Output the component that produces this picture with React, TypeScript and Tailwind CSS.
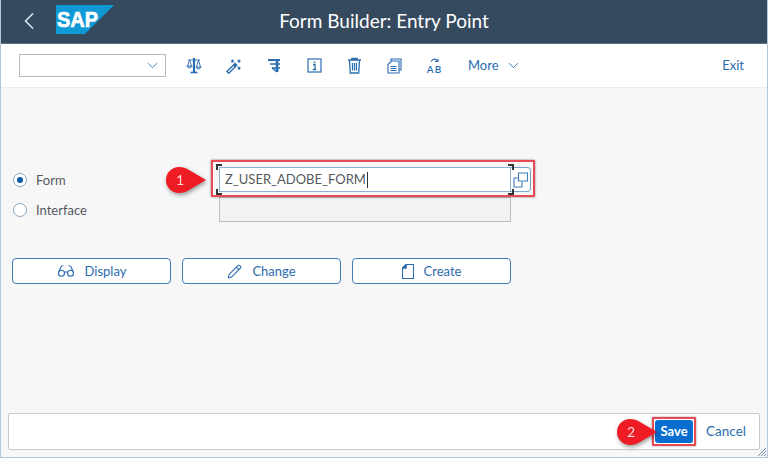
import { ChevronDown, ChevronLeft, Glasses, Pencil } from "lucide-react";

const blue = "#2a6cb0";

const ScalesIcon = () => (
  <svg width="16" height="17" viewBox="0 0 16 17" fill="none" stroke={blue} strokeWidth="1.2">
    <path d="M2 3h12M3.500 3L1.500 9M3.500 3l2 6M12.500 3l-2 7M12.500 3l2 7" strokeWidth="0.9" />
    <path d="M1 9c.5 2.500 4.500 2.500 5 0zM10 10c.5 2.500 4.500 2.500 5 0z" fill="#cfe0f1" strokeWidth="1" />
    <path d="M8 1v14" strokeWidth="2.200" />
    <path d="M4.500 15.500h7" strokeWidth="1.600" />
  </svg>
);

const WandIcon = () => (
  <svg width="16" height="16" viewBox="0 0 16 16" fill={blue}>
    <path d="M1 13.500l8-8 1.800 1.800-8 8z" fill="none" stroke={blue} strokeWidth="1.300" />
    <path d="M7 7.500l1.800 1.800 2-2-1.800-1.800z" />
    <path d="M6.500 1l.6 1.300 1.400.2-1 1 .2 1.400-1.200-.7-1.200.7.2-1.400-1-1 1.400-.2zM13 1l.6 1.300 1.400.2-1 1 .2 1.400-1.200-.7-1.200.7.2-1.400-1-1 1.400-.2zM13 8l.6 1.300 1.400.2-1 1 .2 1.400-1.200-.7-1.200.7.2-1.400-1-1 1.400-.2z" />
  </svg>
);

const TreeIcon = () => (
  <svg width="14" height="16" viewBox="0 0 14 16" fill="none" stroke={blue}>
    <path d="M1 2h12" strokeWidth="2" />
    <path d="M3 6h10M5 10h8" strokeWidth="1.500" />
    <path d="M10 2v12" strokeWidth="2.600" />
    <path d="M5 10l5 4" strokeWidth="1.200" />
  </svg>
);

const InfoIcon = () => (
  <svg width="15" height="15" viewBox="0 0 15 15" fill="none" stroke={blue}>
    <rect x="1" y="1" width="13" height="13" strokeWidth="1.200" />
    <path d="M6 6.500h2v5M5.800 11.500h3.400" strokeWidth="1.300" />
    <path d="M6.800 3.500h1.500v1.500H6.800z" fill={blue} stroke="none" />
  </svg>
);

const TrashIcon = () => (
  <svg width="15" height="17" viewBox="0 0 15 17" fill="none" stroke={blue}>
    <path d="M1 3h13M5 3V1.500h5V3" strokeWidth="1.600" />
    <path d="M2.500 3.500l.8 12.500h8.400l.8-12.500" strokeWidth="1.300" />
    <path d="M5.500 6v7.500M7.500 6v7.500M9.500 6v7.500" strokeWidth="1.200" />
  </svg>
);

const CopyIcon = () => (
  <svg width="15" height="16" viewBox="0 0 15 16" fill="none" stroke={blue} strokeWidth="1.100">
    <path d="M4 3V1h10v11h-2" />
    <path d="M4.500 3H12v12H1V6.500z" fill="#fff" />
    <path d="M3.500 8.500h6M3.500 10.500h6M3.500 12.500h6" />
  </svg>
);

const TranslateIcon = () => (
  <div className="relative flex h-[16px] w-[14px] items-end justify-center gap-px text-[10px] leading-[10px] font-semibold text-[#2a6cb0]">
    <span>A</span>
    <span>B</span>
    <svg className="absolute top-0 left-[3px]" width="9" height="6" viewBox="0 0 9 6" fill="none" stroke={blue} strokeWidth="1.200">
      <path d="M1 3.500C3 .5 6 .5 7 3M5 3.500h3V1" />
    </svg>
  </div>
);

const CreateIcon = () => (
  <svg width="12" height="15" viewBox="0 0 12 15" fill="none" stroke={blue} strokeWidth="1.100">
    <path d="M4 .5h7.500v14H.5V4z" />
    <path d="M.5 4.200L4.200.5v3.700z" fill={blue} />
  </svg>
);

const SapLogo = () => (
  <svg width="58" height="29" viewBox="0 0 58 29">
    <polygon points="0,0 58,0 29,29 0,29" fill="#0f9ad6" />
    <text x="1" y="22" fill="#fff" fontSize="22" fontWeight="700" fontFamily="'Liberation Sans', sans-serif" textLength="41" lengthAdjust="spacingAndGlyphs" stroke="#fff" strokeWidth="0.7">
      SAP
    </text>
  </svg>
);

const Callout = ({ label }: { label: string }) => (
  <div className="relative h-[30px] w-[44px] drop-shadow-[1px_2px_2px_rgba(0,0,0,0.4)]">
    <svg className="absolute inset-0" width="44" height="30" viewBox="0 0 44 30">
      <path d="M14 2c4 0 7 1 10 3l17 10-17 10c-3 2-6 3-10 3A13 13 0 0 1 14 2z" fill="#ee1c25" />
    </svg>
    <span className="absolute top-0 left-[1px] flex h-[30px] w-[28px] items-center justify-center text-sm text-[#ffd9d9]">{label}</span>
  </div>
);

const toolbarIcons = [
  <ScalesIcon key="scales" />,
  <WandIcon key="wand" />,
  <TreeIcon key="tree" />,
  <InfoIcon key="info" />,
  <TrashIcon key="trash" />,
  <CopyIcon key="copy" />,
  <TranslateIcon key="translate" />,
];

const Radio = ({ label, checked }: { label: string; checked?: boolean }) => (
  <div className="flex h-[25px] items-center">
    <span className="ml-px flex h-[14px] w-[14px] items-center justify-center rounded-full border border-[#8fa5bd] bg-white">
      {checked && <span className="h-[6px] w-[6px] rounded-full bg-[#0a5ca8]" />}
    </span>
    <span className="mt-[3px] ml-[9px] text-[13px] text-[#55595e]">{label}</span>
  </div>
);

const ActionButton = ({ icon, label }: { icon: React.ReactNode; label: string }) => (
  <button className="flex h-[26px] w-[159px] items-center justify-center gap-[10px] rounded-[4px] border border-[#3f7cb8] bg-white text-[13px] text-[#2a6cb0]">
    {icon}
    <span className="mt-px">{label}</span>
  </button>
);

export default function App() {
  return (
    <div className="flex h-[458px] w-[768px] flex-col overflow-hidden border-x border-b border-[#b4c7dc] bg-[#f7f7f7] font-['Lato',sans-serif]">
      {/* Shell header */}
      <header className="relative flex h-[44px] shrink-0 items-center justify-center border-b border-[#5a6f84] bg-[#354a5f]">
        <ChevronLeft className="absolute top-[7px] left-[14px] text-[#d4e4f4]" size={28} strokeWidth={1.500} />
        <div className="absolute top-[5px] left-[55px]">
          <SapLogo />
        </div>
        <h1 className="text-[19px] text-white">Form Builder: Entry Point</h1>
      </header>

      {/* Toolbar */}
      <div className="flex h-[44px] shrink-0 items-center border-b border-[#ececec] bg-white pr-[23px] pl-[18px] text-[13px] text-[#2a6cb0]">
        <div className="flex h-[23px] w-[147px] items-center justify-end border border-[#b5b9bd] bg-white pr-[4px]">
          <ChevronDown size={17} strokeWidth={1.300} className="text-[#3f7cb8]" />
        </div>
        <div className="ml-[20px] flex items-center gap-[24px]">
          {toolbarIcons.map((icon, i) => (
            <div key={i} className="flex w-[16px] justify-center">
              {icon}
            </div>
          ))}
        </div>
        <div className="ml-[26px] flex items-center gap-[6px]">
          More
          <ChevronDown size={17} strokeWidth={1.300} />
        </div>
        <span className="ml-auto">Exit</span>
      </div>

      {/* Entry form */}
      <main className="flex flex-1 flex-col px-[11px] pt-[79px]">
        <div className="flex">
          <div className="flex w-[207px] flex-col gap-[5px]">
            <Radio label="Form" checked />
            <Radio label="Interface" />
          </div>
          <div className="relative flex flex-col gap-[5px]">
            <div className="absolute top-[-2px] left-[-54px]">
              <Callout label="1" />
            </div>
            <div className="absolute top-[-7px] left-[-8px] z-10 h-[37px] w-[324px] border-2 border-[#ea4a56] shadow-[0_0_2px_rgba(0,0,0,0.5)]" />
            <div className="relative flex items-center">
              <div className="flex h-[25px] w-[292px] items-center border border-[#8fb0d2] bg-white pl-[5px] text-[13px] text-[#55595e]">
                Z_USER_ADOBE_FORM
                <span className="ml-px h-[16px] w-px bg-[#333]" />
              </div>
              <div className="flex h-[25px] w-[20px] items-center justify-center rounded-r-[4px] border border-l-0 border-[#7aa3cc] bg-white">
                <svg width="16" height="16" viewBox="0 0 16 16" fill="none" stroke="#3f7cb8" strokeWidth="1.100">
                  <path d="M5.500 1h9v8h-9z" />
                  <path d="M5 6H1v9h8v-5" />
                </svg>
              </div>
              {/* Focus corner brackets */}
              <span className="absolute top-[-3px] left-[-3px] h-[6px] w-[6px] border-t-2 border-l-2 border-[#333]" />
              <span className="absolute bottom-[-3px] left-[-3px] h-[6px] w-[6px] border-b-2 border-l-2 border-[#333]" />
              <span className="absolute top-[-3px] left-[289px] h-[6px] w-[6px] border-t-2 border-r-2 border-[#333]" />
              <span className="absolute bottom-[-3px] left-[289px] h-[6px] w-[6px] border-r-2 border-b-2 border-[#333]" />
            </div>
            <div className="h-[25px] w-[292px] border border-[#b8bfc6] bg-[#f2f2f2]" />
          </div>
        </div>

        <div className="mt-[36px] flex gap-[11px]">
          <ActionButton icon={<Glasses size={18} strokeWidth={1.500} />} label="Display" />
          <ActionButton icon={<Pencil size={15} strokeWidth={1.700} />} label="Change" />
          <ActionButton icon={<CreateIcon />} label="Create" />
        </div>
      </main>

      {/* Footer bar */}
      <footer className="relative mx-[7px] mb-[7px] flex h-[37px] shrink-0 items-center justify-end rounded-[2px] border border-[#c9c9c9] bg-white pr-[13px]">
        <div className="absolute top-[3px] right-[99px]">
          <Callout label="2" />
        </div>
        <div className="rounded-[1px] border-2 border-[#ea4a56] p-px shadow-[0_0_2px_rgba(0,0,0,0.5)]">
          <button className="flex h-[23px] w-[38px] items-center justify-center rounded-[3px] bg-[#0a6ed1] text-[13px] font-bold text-white">
            Save
          </button>
        </div>
        <button className="ml-[10px] text-[13.500px] text-[#2a6cb0]">Cancel</button>
        <svg className="absolute right-[-7px] bottom-[-7px]" width="8" height="8" viewBox="0 0 8 8" stroke="#6f8fb0" strokeWidth="1">
          <path d="M0 8L8 0M3 8l5-5M6 8l2-2" />
        </svg>
      </footer>
    </div>
  );
}
